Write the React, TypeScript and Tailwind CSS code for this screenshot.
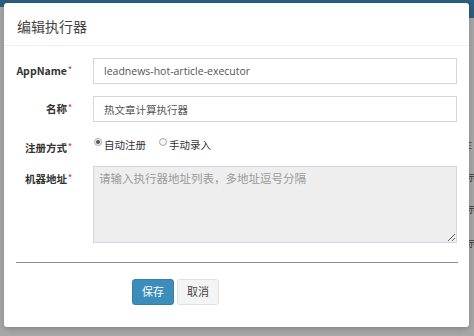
import React from 'react';

const cjk = { fontFamily: '"Open Sans", "Noto Sans CJK SC", sans-serif' };
const labelFont = { fontFamily: '"Noto Sans CJK SC", "Noto Sans", sans-serif' };

const Label: React.FC<{ text: string; className?: string }> = ({ text, className = '' }) => (
  <div
    className={`w-[89px] shrink-0 pr-[21px] text-right text-[10.5px] font-bold text-[#333] leading-[14px] ${className}`}
    style={labelFont}
  >
    {text}
    <span className="relative -top-[3px] ml-[1px] text-[8px] text-[#dd4b39]">*</span>
  </div>
);

const Radio: React.FC<{ checked?: boolean; text: string }> = ({ checked, text }) => (
  <label className="flex items-start gap-[2px] text-[10.5px] text-[#333] leading-[16px]" style={labelFont}>
    <span className="mt-[4px] flex h-[8px] w-[8px] items-center justify-center rounded-full border border-[#aaa] bg-[#f7f7f7]">
      {checked && <span className="h-[4px] w-[4px] rounded-full bg-[#555]" />}
    </span>
    <span className="mt-[3px]">{text}</span>
  </label>
);

export default function App() {
  return (
    <div className="relative h-[336px] w-[474px] overflow-hidden bg-[#a7a7a7]" style={cjk}>
      {/* page underneath the overlay */}
      <div className="flex h-full">
        <div className="w-[4px] shrink-0">
          <div className="h-[7px] bg-[#2b5f80]" />
        </div>
        <div className="flex flex-1 flex-col">
          <div className="h-[18px] bg-[#2b5f80]" />
          <div className="flex flex-1 justify-end">
            <div className="flex w-[7px] flex-col overflow-hidden pt-[120px] text-[9px] leading-[14px] text-[#3a3a3a]">
              <span className="mt-[1px]">E</span>
              <span className="mt-[18px]">示</span>
              <span className="mt-[18px]">示</span>
              <span className="mt-[20px]">示</span>
            </div>
          </div>
        </div>
      </div>

      {/* modal */}
      <div className="absolute left-[4px] top-[3px] flex h-[324px] w-[465px] flex-col rounded-[3px] bg-white shadow-[0_2px_6px_rgba(0,0,0,0.2)]">
        <div className="flex h-[43px] items-center border-b border-[#f0f0f0] pl-[13px] pt-[4px]">
          <h4 className="text-[14px] font-normal text-[#444]">编辑执行器</h4>
        </div>

        <div className="flex flex-col gap-[12px] pt-[12px] pr-[12px]">
          <div className="flex items-start">
            <Label text="AppName" className="pt-[6px]" />
            <input
              readOnly
              value="leadnews-hot-article-executor"
              className="h-[26px] flex-1 border border-[#d2d6de] px-[10px] text-[10.5px] text-[#555] outline-none"
              style={cjk}
            />
          </div>
          <div className="flex items-start">
            <Label text="名称" className="pt-[6px]" />
            <input
              readOnly
              value="热文章计算执行器"
              className="h-[26px] flex-1 border border-[#d2d6de] px-[10px] text-[10.5px] text-[#555] outline-none"
              style={cjk}
            />
          </div>
          <div className="flex h-[20px] items-start">
            <Label text="注册方式" className="pt-[7px]" />
            <div className="flex gap-[13px] pl-[1px]">
              <Radio checked text="自动注册" />
              <Radio text="手动录入" />
            </div>
          </div>
          <div className="flex items-start">
            <Label text="机器地址" className="pt-[6px]" />
            <textarea
              readOnly
              placeholder="请输入执行器地址列表，多地址逗号分隔"
              className="h-[77px] flex-1 resize-y border border-[#d2d6de] bg-[#eeeeee] px-[5px] py-[4px] text-[11.5px] leading-[16px] text-[#555] outline-none placeholder:text-[#9a9a9a]"
              style={cjk}
            />
          </div>
        </div>

        <div className="mx-[12px] mt-[19px] mr-[11px] border-t border-[#8c8c8c]" />

        <div className="flex gap-[3px] pl-[128px] pt-[16px]">
          <button className="h-[26px] w-[42px] rounded-[3px] border border-[#367fa9] bg-[#3c8dbc] text-[11px] text-white">
            保存
          </button>
          <button className="h-[26px] w-[42px] rounded-[3px] border border-[#e2e2e2] bg-[#f4f4f4] text-[11px] text-[#444]">
            取消
          </button>
        </div>
      </div>
    </div>
  );
}
